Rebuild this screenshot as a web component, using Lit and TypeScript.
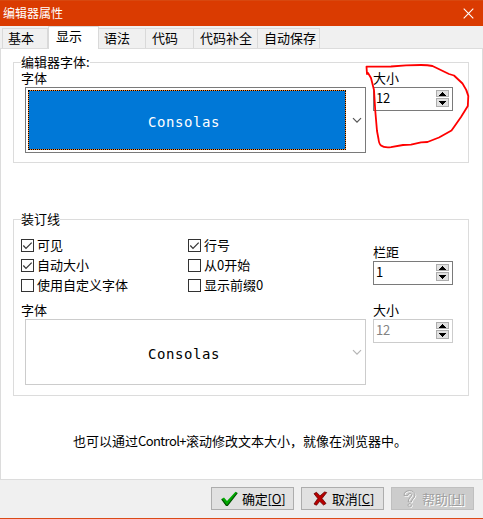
import { LitElement, html, css, svg } from "lit";
import { customElement, property } from "lit/decorators.js";
import { classMap } from "lit/directives/class-map.js";

@customElement("spin-edit")
class SpinEdit extends LitElement {
  @property() value = "";
  @property({ type: Boolean }) disabled = false;
  static styles = css`
    :host { display: block; }
    .box { box-sizing: border-box; width: 80px; height: 24px; border: 1px solid #7a7a7a; background: #fff; display: flex; justify-content: space-between; padding: 2px 3px 0 2px; line-height: 15px; }
    .off { border-color: #ccc; color: #838383; }
    .num { letter-spacing: -0.3px; }
    svg { display: block; }
  `;
  render() {
    return html`<div class=${classMap({ box: true, off: this.disabled })}>
      <span class="num">${this.value}</span>
      <svg width="13" height="17" viewBox="0 0 13 17" shape-rendering="crispEdges">
        <path d="M.5 .5H12.5V6.5H.5ZM.5 8.5H12.5V16.5H.5Z" fill="#e1e1e1" stroke="#adadad"/>
        <path d="M6 2H7V3H8V4H9V5H10V6H3V5H4V4H5V3H6ZM3 11H10V12H9V13H8V14H7V15H6V14H5V13H4V12H3Z" fill="#000"/>
      </svg>
    </div>`;
  }
}

@customElement("font-combo")
class FontCombo extends LitElement {
  @property() value = "";
  @property({ type: Boolean }) disabled = false;
  static styles = css`
    :host { display: block; }
    .box { box-sizing: border-box; width: 341px; height: 66px; border: 1px solid #7a7a7a; background: #fff; display: flex; padding: 2px; align-items: center; }
    .off { border-color: #ccc; }
    .face { box-sizing: border-box; width: 318px; height: 60px; display: flex; align-items: center; justify-content: center; padding: 3px 6px 0 0; font: 14px "DejaVu Sans Mono", monospace; letter-spacing: 0.58px; border: 1px solid transparent; }
    .box:not(.off) .face { color: #fff; border: 1px dotted #000; background-image: linear-gradient(#0078d7, #0078d7), linear-gradient(#ff8728, #ff8728); background-clip: padding-box, border-box; }
    svg { margin: 1px 0 0 6px; }
  `;
  render() {
    return html`<div class=${classMap({ box: true, off: this.disabled })}>
      <span class="face">${this.value}</span>
      <svg width="10" height="7" viewBox="0 0 10 7"><path d="M1 1.2L5 5.2L9 1.2" fill="none" stroke=${this.disabled ? "#b5b5b5" : "#555"} stroke-width="1.2"/></svg>
    </div>`;
  }
}

@customElement("check-item")
class CheckItem extends LitElement {
  @property() label = "";
  @property({ type: Boolean }) checked = false;
  static styles = css`
    :host { display: flex; align-items: center; height: 20px; gap: 3px; line-height: 20px; white-space: nowrap; }
    svg { flex: none; }
  `;
  render() {
    return html`<svg width="13" height="13" viewBox="0 0 13 13">
        <rect x=".5" y=".5" width="12" height="12" fill="#fff" stroke="#333"/>
        ${this.checked ? svg`<path d="M2.3 6.5L5 9.3L10.7 3.6" fill="none" stroke="#333" stroke-width="1.2"/>` : ""}
      </svg><span>${this.label}</span>`;
  }
}

const questionMark = "M3 5.5C3 2 5.5 .7 8.5 .7C12 .7 14 2.6 14 5C14 7.8 10.6 8.7 10.4 12H7.2C7 7.9 10.6 7 10.6 5C10.6 2.9 6.9 2.9 6.5 5.8ZM8.8 13.6A1.7 1.7 0 1 1 8.7 13.6Z";

@customElement("app-root")
class AppRoot extends LitElement {
  static styles = css`
    :host { display: flex; flex-direction: column; box-sizing: border-box; position: relative; width: 483px; height: 519px; overflow: hidden; background: #f0f0f0; border-bottom: 1px solid #da4a16; color: #000; font: 13px "Noto Sans CJK SC", sans-serif; white-space: nowrap; }
    .title { height: 26px; box-sizing: border-box; border-top: 1px solid #d8480f; background: #da3b01; color: #fff; font-size: 12px; line-height: 24px; padding: 0 9px 0 3px; display: flex; justify-content: space-between; align-items: center; }
    .title span { margin-top: -1px; }
    .tabs { height: 22px; flex: none; display: flex; align-items: flex-end; padding-left: 2px; }
    .tab { box-sizing: border-box; height: 20px; border: 1px solid #d9d9d9; border-width: 1px 1px 0 0; line-height: 18px; padding-left: 6px; }
    .tab:first-child { border-left-width: 1px; padding-left: 5px; width: 46px; }
    .w47 { width: 47px; } .w48 { width: 48px; } .w64 { width: 64px; } .w62 { width: 62px; }
    .active { width: 51px; height: 23px; margin-bottom: -1px; background: #fff; border-left-width: 1px; line-height: 18px; padding-left: 7px; z-index: 1; }
    .active + .tab { padding-left: 5px; }
    .pane { box-sizing: border-box; flex: none; height: 432px; border: 1px solid #dcdcdc; background: #fff; padding: 13px 14px 0 12px; }
    .group { box-sizing: border-box; width: 456px; border: 1px solid #dcdcdc; padding: 0 0 0 7px; }
    .first { height: 101px; margin-bottom: 56px; }
    .second { height: 177px; }
    .legend { display: block; width: max-content; height: 16px; line-height: 16px; margin-top: -9px; background: #fff; }
    .row { display: flex; gap: 7px; }
    .fontcol { width: 345px; }
    .label { display: block; height: 17px; line-height: 15px; }
    .fontcol font-combo { margin-left: 4px; }
    .options { display: grid; grid-template-columns: 167px 185px 80px; margin-top: 8px; height: 67px; }
    .pitch { padding-top: 9px; }
    .note { margin: 36px 0 0 60px; line-height: 18px; }
    .latin { letter-spacing: -0.6px; }
    .actions { display: flex; gap: 7px; padding: 7px 0 0 211px; }
    .button { box-sizing: border-box; width: 83px; height: 23px; border: 1px solid #adadad; background: #e1e1e1; display: flex; align-items: center; gap: 4px; padding-left: 9px; line-height: 20px; letter-spacing: -0.2px; }
    .key { text-decoration: underline; text-underline-offset: 1px; }
    .disabled { background: #ccc; border-color: #bfbfbf; color: #a0a0a0; text-shadow: 1px 1px #fff; }
    .ink { position: absolute; left: 0; top: 0; pointer-events: none; z-index: 2; }
  `;
  render() {
    return html`
      <header class="title"><span>编辑器属性</span>
        <svg width="11" height="11" viewBox="0 0 11 11"><path d="M.7 .7L10.3 10.3M10.3 .7L.7 10.3" stroke="#fff" stroke-width="1.1"/></svg>
      </header>
      <nav class="tabs">
        <span class="tab">基本</span><span class="tab active">显示</span><span class="tab w47">语法</span><span class="tab w48">代码</span><span class="tab w64">代码补全</span><span class="tab w62">自动保存</span>
      </nav>
      <main class="pane">
        <section class="group first">
          <span class="legend">编辑器字体:</span>
          <div class="row">
            <div class="fontcol"><span class="label">字体</span><font-combo value="Consolas"></font-combo></div>
            <div><span class="label">大小</span><spin-edit value="12"></spin-edit></div>
          </div>
        </section>
        <section class="group second">
          <span class="legend">装订线</span>
          <div class="options">
            <div><check-item label="可见" checked></check-item><check-item label="自动大小" checked></check-item><check-item label="使用自定义字体"></check-item></div>
            <div><check-item label="行号" checked></check-item><check-item label="从0开始"></check-item><check-item label="显示前缀0"></check-item></div>
            <div class="pitch"><span class="label">栏距</span><spin-edit value="1"></spin-edit></div>
          </div>
          <div class="row">
            <div class="fontcol"><span class="label">字体</span><font-combo value="Consolas" disabled></font-combo></div>
            <div><span class="label">大小</span><spin-edit value="12" disabled></spin-edit></div>
          </div>
        </section>
        <div class="note">也可以通过<span class="latin">Control+</span>滚动修改文本大小，就像在浏览器中。</div>
      </main>
      <footer class="actions">
        <div class="button"><svg width="17" height="17" viewBox="0 0 17 17"><path d="M.5 9L3 7.5L6 11L14.5 1.8L16.3 2.8L6.5 15.5H5Z" fill="#00a800"/><path d="M.7 9.2L5.3 15.4H6.5L16.3 2.9" fill="none" stroke="#005000" stroke-width="1.1"/></svg><span>确定[<span class="key">O</span>]</span></div>
        <div class="button"><svg width="17" height="17" viewBox="0 0 17 17"><path d="M3 3.7L5.5 2.3L9 5.9L13.5 2L15.7 2.5L11 8.5L15 13.5L12.5 15L8.7 11.3L5.5 15.2L3 14L6.8 8.5Z" fill="#b80000" stroke="#650000" stroke-width=".8"/></svg><span>取消[<span class="key">C</span>]</span></div>
        <div class="button disabled"><svg width="17" height="18" viewBox="0 0 17 18"><g fill="none" stroke-width="1"><path d=${questionMark} stroke="#fff" transform="translate(.8 .8)"/><path d=${questionMark} stroke="#a0a0a0" stroke-width=".9"/></g></svg><span>帮助[<span class="key">H</span>]</span></div>
      </footer>
      <svg class="ink" width="483" height="160" viewBox="0 0 483 160"><path d="M367 74L366.5 66.7L391 66.5Q406 65 421 65Q428 65 432.5 66L449 74L454 75.5L462.5 83.5Q467 90 468.3 96L467.8 106L461 117L454 127L451.5 130.5L439 137.5L427.5 142L421 142.3L411 144.7L403 145L391 147.2Q384 148 381 145.5Q379 144 378.5 139L377 131L375.2 110L374 90L371 78L368 73" fill="none" stroke="#ff0000" stroke-width="1.8" stroke-linejoin="round" stroke-linecap="round"/></svg>
    `;
  }
}
